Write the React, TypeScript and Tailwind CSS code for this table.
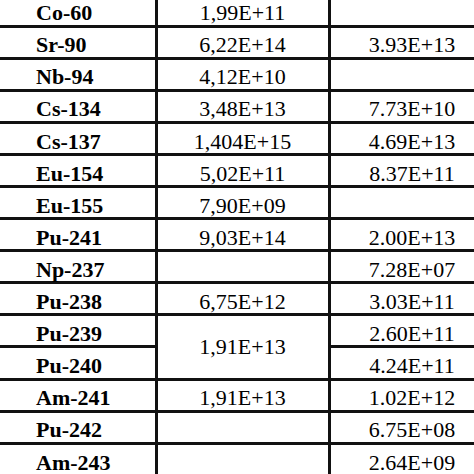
import React from "react";

type Row = { n: string; a: string; b: string; span?: boolean; skipA?: boolean };

const rows: Row[] = [
  { n: "Co-60", a: "1,99E+11", b: "" },
  { n: "Sr-90", a: "6,22E+14", b: "3.93E+13" },
  { n: "Nb-94", a: "4,12E+10", b: "" },
  { n: "Cs-134", a: "3,48E+13", b: "7.73E+10" },
  { n: "Cs-137", a: "1,404E+15", b: "4.69E+13" },
  { n: "Eu-154", a: "5,02E+11", b: "8.37E+11" },
  { n: "Eu-155", a: "7,90E+09", b: "" },
  { n: "Pu-241", a: "9,03E+14", b: "2.00E+13" },
  { n: "Np-237", a: "", b: "7.28E+07" },
  { n: "Pu-238", a: "6,75E+12", b: "3.03E+11" },
  { n: "Pu-239", a: "1,91E+13", b: "2.60E+11", span: true },
  { n: "Pu-240", a: "", b: "4.24E+11", skipA: true },
  { n: "Am-241", a: "1,91E+13", b: "1.02E+12" },
  { n: "Pu-242", a: "", b: "6.75E+08" },
  { n: "Am-243", a: "", b: "2.64E+09" },
];

export default function App() {
  return (
    <div className="w-[474px] h-[474px] overflow-hidden bg-white text-black text-[22px] leading-[24px] font-['Liberation_Serif','Times_New_Roman',serif]">
      <div className="-mt-[4.6px] w-[493.5px] grid grid-cols-[157.5px_173px_163px] auto-rows-[32.1px]">
        {rows.map((r, i) => (
          <React.Fragment key={i}>
            <div className="border-b-[3px] border-r-[3px] border-[#111] pl-[36px] pt-[5.8px] font-bold whitespace-nowrap">
              {r.n}
            </div>
            {r.skipA ? null : r.span ? (
              <div className="row-span-2 border-b-[3px] border-r-[3px] border-[#111] flex items-center justify-center whitespace-nowrap">
                {r.a}
              </div>
            ) : (
              <div className="border-b-[3px] border-r-[3px] border-[#111] pt-[5.8px] text-center whitespace-nowrap">
                {r.a}
              </div>
            )}
            <div className="border-b-[3px] border-[#111] pt-[5.8px] text-center whitespace-nowrap">
              {r.b}
            </div>
          </React.Fragment>
        ))}
      </div>
    </div>
  );
}
